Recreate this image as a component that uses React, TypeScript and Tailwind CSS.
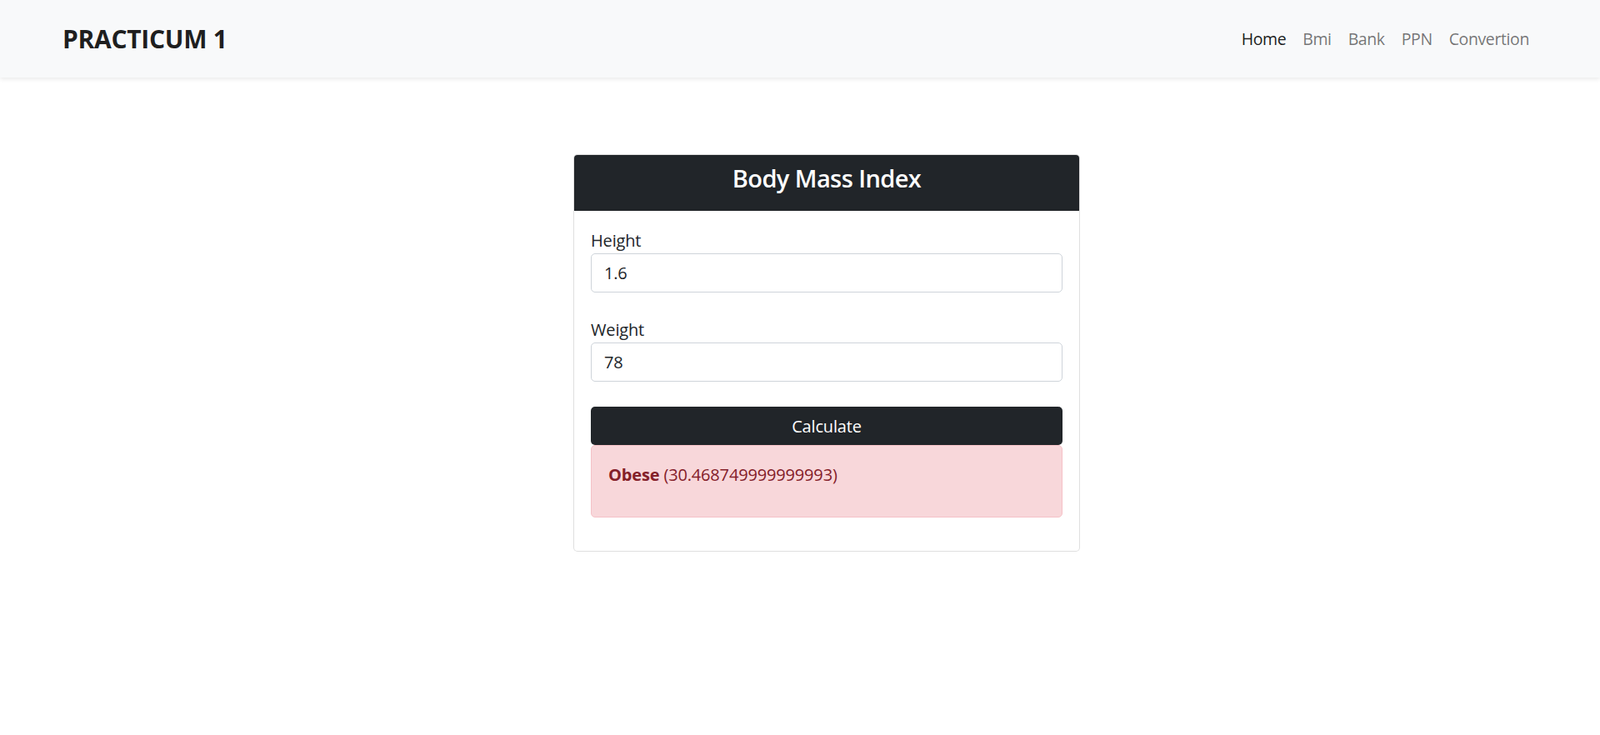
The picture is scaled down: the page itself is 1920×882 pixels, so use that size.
import React from 'react';

const links = [
  { label: 'Home', active: true },
  { label: 'Bmi', active: false },
  { label: 'Bank', active: false },
  { label: 'PPN', active: false },
  { label: 'Convertion', active: false },
];

function Navbar() {
  return (
    <nav className="h-[93px] bg-[#f8f9fa] shadow-[0_2.5px_5px_rgba(0,0,0,0.075)] px-[75px] flex items-center justify-between">
      <a href="#" className="text-[30px] font-bold text-black/90 leading-[36px] tracking-[-0.01em]">
        PRACTICUM 1
      </a>
      <ul className="flex items-center text-[19.5px] leading-[30px] tracking-[-0.02em]">
        {links.map((link) => (
          <li key={link.label}>
            <a href="#" className={`block px-[10px] ${link.active ? 'text-black/90' : 'text-black/55'}`}>
              {link.label}
            </a>
          </li>
        ))}
      </ul>
    </nav>
  );
}

function Field({ label, value }: { label: string; value: string }) {
  return (
    <div className="mb-[30px]">
      <label className="block text-[20px] leading-[30px]">{label}</label>
      <input
        type="text"
        defaultValue={value}
        className="block w-full h-[47px] px-[15px] bg-white border border-[#ced4da] rounded-[5px] text-[20px] text-[#212529] outline-none"
      />
    </div>
  );
}

export default function App() {
  return (
    <div className="min-h-screen bg-white text-[#212529] font-['Open_Sans','Noto_Sans',sans-serif]">
      <Navbar />
      <main className="flex justify-center pt-[92px] pl-[64px]">
        <div className="w-[608px] border border-black/[0.125] rounded-[5px] overflow-hidden bg-white">
          <div className="bg-[#212529] text-white text-center py-[10px] border-b border-black/[0.125]">
            <h4 className="text-[29px] leading-[36px] font-semibold mb-[10px] tracking-[-0.02em]">Body Mass Index</h4>
          </div>
          <div className="px-[20px] pt-[21px] pb-[20px] tracking-[-0.01em]">
            <Field label="Height" value="1.6" />
            <Field label="Weight" value="78" />
            <button className="block w-full h-[46px] bg-[#212529] text-white text-[20px] leading-[30px] pt-[2px] rounded-[5px]">
              Calculate
            </button>
            <div className="mb-[20px] bg-[#f8d7da] border border-[#f5c2c7] rounded-[5px] text-[#842029] text-[20px] leading-[30px] px-[20px] pt-[20px] pb-[35px]">
              <span className="font-bold">Obese</span> (30.468749999999993)
            </div>
          </div>
        </div>
      </main>
    </div>
  );
}
